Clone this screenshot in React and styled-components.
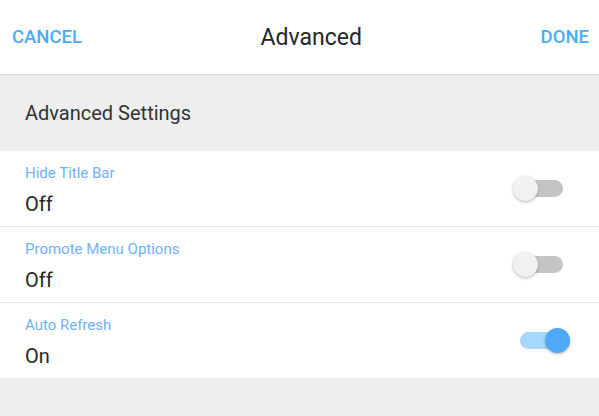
import React, { useState } from "react";
import styled, { createGlobalStyle } from "styled-components";

const GlobalStyle = createGlobalStyle`
  html, body {
    margin: 0;
    padding: 0;
    background: #eeeeee;
    font-family: Roboto, "Noto Sans", Arial, sans-serif;
  }
`;

const settings = [
  { key: "hideTitle", label: "Hide Title Bar", on: false },
  { key: "promote", label: "Promote Menu Options", on: false },
  { key: "autoRefresh", label: "Auto Refresh", on: true },
];

export default function App() {
  const [values, setValues] = useState(
    Object.fromEntries(settings.map((s) => [s.key, s.on]))
  );

  const toggle = (key) => setValues((v) => ({ ...v, [key]: !v[key] }));

  return (
    <Page>
      <GlobalStyle />
      <Header>
        <HeaderButton>CANCEL</HeaderButton>
        <Title>Advanced</Title>
        <HeaderButton>DONE</HeaderButton>
      </Header>

      <SectionHeader>Advanced Settings</SectionHeader>

      <List>
        {settings.map((s) => (
          <Row key={s.key}>
            <RowText>
              <Label>{s.label}</Label>
              <Value>{values[s.key] ? "On" : "Off"}</Value>
            </RowText>
            <Switch $on={values[s.key]} onClick={() => toggle(s.key)}>
              <Thumb $on={values[s.key]} />
            </Switch>
          </Row>
        ))}
      </List>
    </Page>
  );
}

const Page = styled.div`
  min-height: 416px;
  background: #eeeeee;
  display: flex;
  flex-direction: column;
`;

const Header = styled.header`
  height: 74px;
  background: #ffffff;
  border-bottom: 1px solid #d4d4d4;
  display: flex;
  align-items: center;
  justify-content: space-between;
  padding: 0 10px 0 12px;
`;

const HeaderButton = styled.span`
  color: #4aacf7;
  font-size: 18.5px;
  font-weight: 500;
  cursor: pointer;
`;

const Title = styled.h1`
  margin: 0;
  font-size: 23px;
  font-weight: 400;
  color: #262626;
`;

const SectionHeader = styled.div`
  height: 76px;
  display: flex;
  align-items: center;
  padding: 0 25px;
  font-size: 20px;
  color: #333333;
`;

const List = styled.div`
  background: #ffffff;
  display: flex;
  flex-direction: column;
`;

const Row = styled.div`
  height: 75px;
  display: flex;
  align-items: center;
  justify-content: space-between;
  padding: 0 36px 0 25px;
  border-bottom: 1px solid #e6e6e6;

  &:last-child {
    border-bottom: none;
  }
`;

const RowText = styled.div`
  display: flex;
  flex-direction: column;
  gap: 10px;
  padding-top: 3px;
`;

const Label = styled.span`
  font-size: 15px;
  color: #6eb2ff;
`;

const Value = styled.span`
  font-size: 20px;
  color: #262626;
`;

const Switch = styled.div`
  position: relative;
  width: 43px;
  height: 17px;
  border-radius: 9px;
  background: ${(p) => (p.$on ? "#a6d7ff" : "#c4c4c4")};
  cursor: pointer;
`;

const Thumb = styled.div`
  position: absolute;
  top: -4px;
  left: ${(p) => (p.$on ? "25px" : "-7px")};
  width: 25px;
  height: 25px;
  border-radius: 50%;
  background: ${(p) => (p.$on ? "#4daafb" : "#f1f1f1")};
  box-shadow: 0 1px 3px rgba(0, 0, 0, 0.3);
`;
